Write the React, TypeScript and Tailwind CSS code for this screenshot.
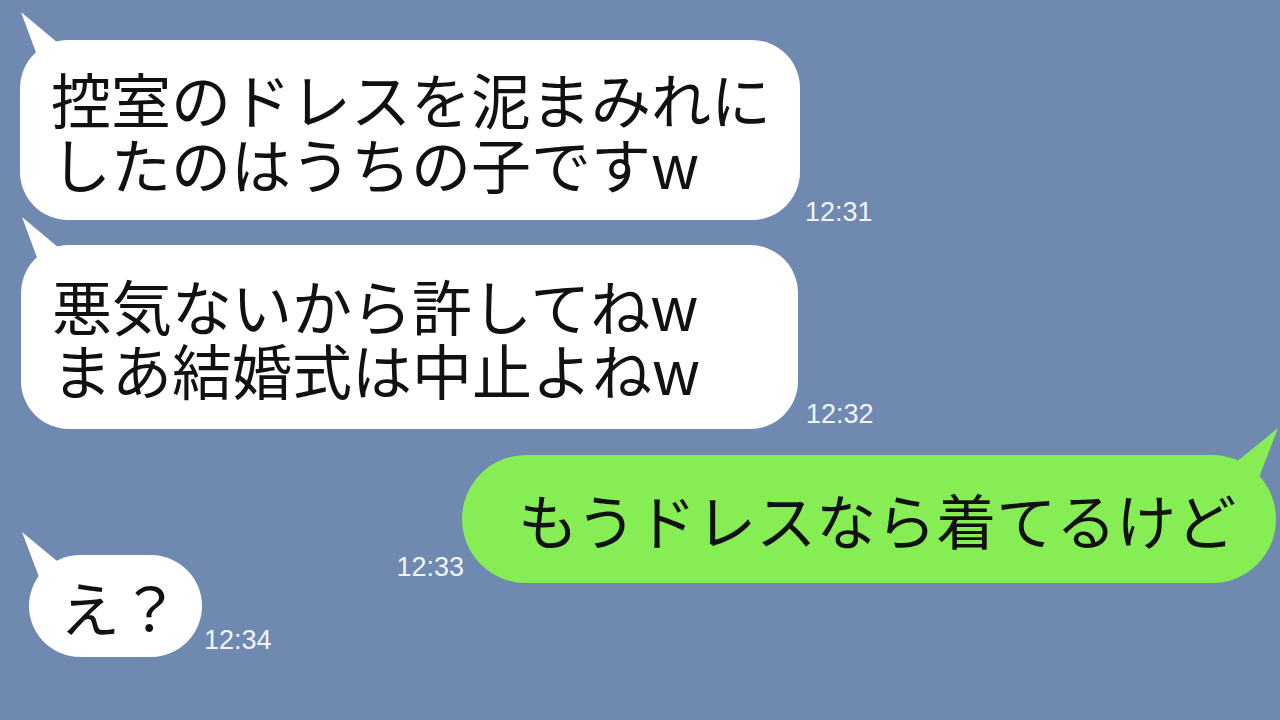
import React from "react";

const jp = { fontFamily: '"Noto Sans CJK JP", "Noto Sans", sans-serif' };
const ts = { fontFamily: '"Liberation Sans", Arial, sans-serif' };

function LeftTail({ fill = "#ffffff" }: { fill?: string }) {
  return (
    <svg
      className="absolute left-0 top-[-30px]"
      width="45"
      height="50"
      viewBox="0 0 45 50"
    >
      <polygon points="1,2 38,33 18,48" fill={fill} />
    </svg>
  );
}

function Time({ t, className }: { t: string; className: string }) {
  return (
    <div
      style={ts}
      className={"text-[27px] leading-none text-[#f2f6fb] whitespace-nowrap " + className}
    >
      {t}
    </div>
  );
}

export default function App() {
  return (
    <div
      style={jp}
      className="w-[1280px] h-[720px] bg-[#6f89b0] overflow-hidden flex flex-col text-[#111111]"
    >
      {/* Row 1 */}
      <div className="flex items-end ml-[20px] mt-[40px]">
        <div className="relative w-[780px] h-[180px] rounded-[48px] bg-white flex flex-col justify-center pl-[31px] text-[60px] leading-[65px] whitespace-nowrap">
          <LeftTail />
          <p className="relative">
            控室のドレスを泥まみれに
            <br />
            したのはうちの子ですw
          </p>
        </div>
        <Time t="12:31" className="ml-[5px] mb-[-6px]" />
      </div>

      {/* Row 2 */}
      <div className="flex items-end ml-[21px] mt-[25px]">
        <div className="relative w-[777px] h-[184px] rounded-[48px] bg-white flex flex-col justify-center pl-[31px] text-[60px] leading-[64px] whitespace-nowrap">
          <LeftTail />
          <p className="relative">
            悪気ないから許してねw
            <br />
            まあ結婚式は中止よねw
          </p>
        </div>
        <Time t="12:32" className="ml-[8px] mb-[1px]" />
      </div>

      {/* Row 3 */}
      <div className="flex items-end justify-end mr-[4px] mt-[26px]">
        <Time t="12:33" className="mr-[-2px] mb-[2px]" />
        <div className="relative w-[814px] h-[128px] rounded-full bg-[#86ee54] flex items-center pl-[56px] text-[60px] leading-[64px] whitespace-nowrap">
          <svg
            className="absolute right-[-4px] top-[-30px]"
            width="50"
            height="60"
            viewBox="0 0 50 60"
          >
            <polygon points="48,3 5,38 28,55" fill="#86ee54" />
          </svg>
          <p className="relative">もうドレスなら着てるけど</p>
        </div>
      </div>

      {/* Row 4 */}
      <div className="flex items-end ml-[29px] mt-[-28px]">
        <div className="relative w-[173px] h-[102px] rounded-full bg-white flex items-center pl-[31px] text-[60px] leading-[64px] whitespace-nowrap">
          <svg
            className="absolute left-[-8px] top-[-24px]"
            width="45"
            height="50"
            viewBox="0 0 45 50"
          >
            <polygon points="1,1 36,30 18,46" fill="#ffffff" />
          </svg>
          <p className="relative">え？</p>
        </div>
        <Time t="12:34" className="ml-[2px] mb-[3px]" />
      </div>
    </div>
  );
}
